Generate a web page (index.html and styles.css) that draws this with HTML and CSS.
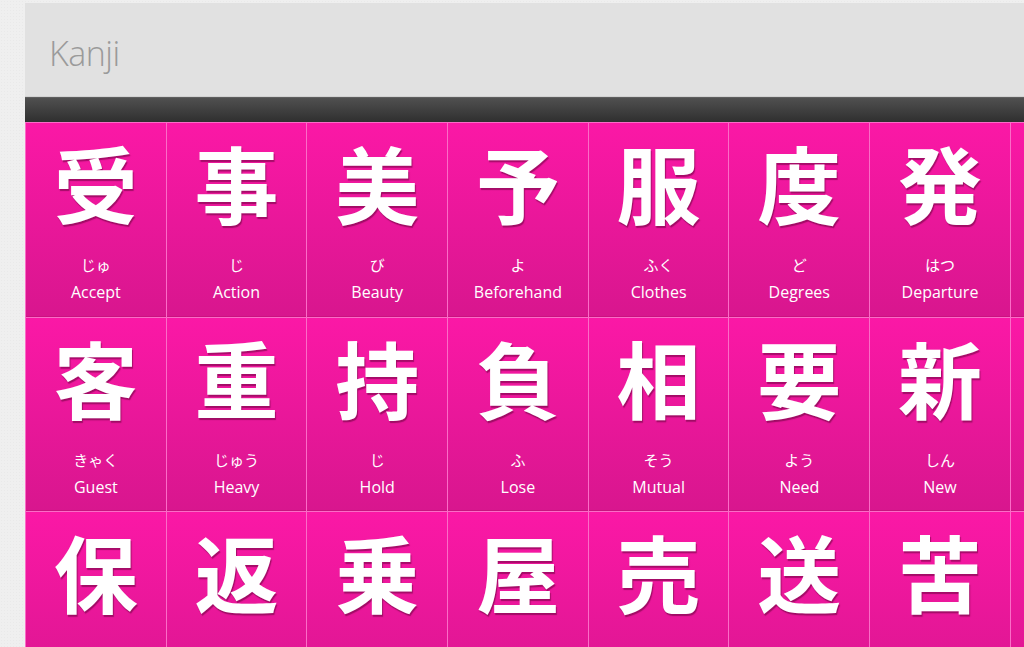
FILE: index.html
```html
<!DOCTYPE html>
<html>
<head>
    <meta charset="UTF-8" />
    <title>Kanji</title>
    <link rel="stylesheet" href="styles.css">
</head>
<body>
    <div id="page">
        <div class="header">
            <h1>Kanji</h1>
        </div>
        <div class="toolbar"></div>

        <div class="grid">
            <div class="tile"><div class="kanji">受</div><div class="kana">じゅ</div><div class="meaning">Accept</div></div>
            <div class="tile"><div class="kanji">事</div><div class="kana">じ</div><div class="meaning">Action</div></div>
            <div class="tile"><div class="kanji">美</div><div class="kana">び</div><div class="meaning">Beauty</div></div>
            <div class="tile"><div class="kanji">予</div><div class="kana">よ</div><div class="meaning">Beforehand</div></div>
            <div class="tile"><div class="kanji">服</div><div class="kana">ふく</div><div class="meaning">Clothes</div></div>
            <div class="tile"><div class="kanji">度</div><div class="kana">ど</div><div class="meaning">Degrees</div></div>
            <div class="tile"><div class="kanji">発</div><div class="kana">はつ</div><div class="meaning">Departure</div></div>
            <div class="tile"></div>

            <div class="tile"><div class="kanji">客</div><div class="kana">きゃく</div><div class="meaning">Guest</div></div>
            <div class="tile"><div class="kanji">重</div><div class="kana">じゅう</div><div class="meaning">Heavy</div></div>
            <div class="tile"><div class="kanji">持</div><div class="kana">じ</div><div class="meaning">Hold</div></div>
            <div class="tile"><div class="kanji">負</div><div class="kana">ふ</div><div class="meaning">Lose</div></div>
            <div class="tile"><div class="kanji">相</div><div class="kana">そう</div><div class="meaning">Mutual</div></div>
            <div class="tile"><div class="kanji">要</div><div class="kana">よう</div><div class="meaning">Need</div></div>
            <div class="tile"><div class="kanji">新</div><div class="kana">しん</div><div class="meaning">New</div></div>
            <div class="tile"></div>

            <div class="tile"><div class="kanji">保</div></div>
            <div class="tile"><div class="kanji">返</div></div>
            <div class="tile"><div class="kanji">乗</div></div>
            <div class="tile"><div class="kanji">屋</div></div>
            <div class="tile"><div class="kanji">売</div></div>
            <div class="tile"><div class="kanji">送</div></div>
            <div class="tile"><div class="kanji">苦</div></div>
            <div class="tile"></div>
        </div>
    </div>
</body>
</html>
```

FILE: styles.css
```css
* {
    margin: 0;
    padding: 0;
    box-sizing: border-box;
}
html, body {
    height: 100%;
    overflow: hidden;
}
body {
    font-family: "Open Sans", "Noto Sans CJK JP", sans-serif;
    background-color: #efefef;
    background-image: radial-gradient(rgba(0,0,0,0.025) 1px, transparent 1px);
    background-size: 3px 3px;
}
#page {
    margin: 3px 0 0 25px;
    height: 644px;
    overflow: hidden;
}
.header {
    height: 94px;
    background-color: #e1e1e1;
    border-bottom: 1px solid #d2d2d2;
    padding: 30px 0 0 24px;
}
.header h1 {
    font-family: "Open Sans", sans-serif;
    font-weight: 300;
    font-size: 34px;
    line-height: 40px;
    color: #9a9a9a;
    letter-spacing: -0.5px;
}
.toolbar {
    height: 25px;
    background: linear-gradient(#505050, #2f2f2f);
    border-top: 1px solid #5e5e5e;
}
.grid {
    display: grid;
    grid-template-columns: repeat(8, 140.7px);
    grid-auto-rows: 194.7px;
    width: 1126px;
}
.tile {
    display: flex;
    flex-direction: column;
    align-items: center;
    background: linear-gradient(#fb18a6, #d8168e);
    border-left: 1px solid #fb6cc7;
    border-top: 1px solid #fb6cc7;
    box-shadow: inset 0 -1px 0 #c9137f;
    color: #fff;
}
.kanji {
    font-family: "Noto Sans CJK JP", sans-serif;
    font-weight: 700;
    font-size: 84px;
    line-height: 84px;
    margin-top: 17px;
    text-shadow: 1px 2px 1px rgba(90, 0, 50, 0.5);
}
.kana {
    font-family: "Noto Sans CJK JP", sans-serif;
    font-size: 15px;
    line-height: 20px;
    margin-top: 31px;
}
.meaning {
    font-family: "Open Sans", sans-serif;
    font-size: 16px;
    line-height: 22px;
    margin-top: 6px;
}
```
